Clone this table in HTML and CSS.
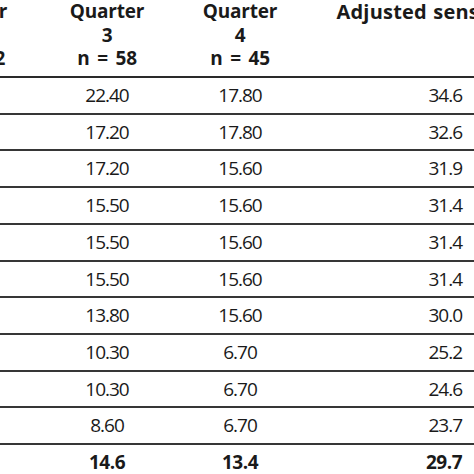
FILE: index.html
```html
<!DOCTYPE html>
<html>
<head>
<meta charset="utf-8">
<link rel="stylesheet" href="styles.css">
</head>
<body>
<table class="tbl">
  <colgroup>
    <col class="c2"><col class="c3"><col class="c4"><col class="c5">
  </colgroup>
  <thead>
    <tr class="head">
      <th>Quarter<br>2<br>n = 102</th>
      <th>Quarter<br>3<br>n = 58</th>
      <th>Quarter<br>4<br>n = 45</th>
      <th class="adj">Adjusted sensitivity (%)</th>
    </tr>
  </thead>
  <tbody>
    <tr><td>20.70</td><td>22.40</td><td>17.80</td><td class="r">34.6</td></tr>
    <tr><td>19.00</td><td>17.20</td><td>17.80</td><td class="r">32.6</td></tr>
    <tr><td>19.00</td><td>17.20</td><td>15.60</td><td class="r">31.9</td></tr>
    <tr><td>19.00</td><td>15.50</td><td>15.60</td><td class="r">31.4</td></tr>
    <tr><td>19.00</td><td>15.50</td><td>15.60</td><td class="r">31.4</td></tr>
    <tr><td>19.00</td><td>15.50</td><td>15.60</td><td class="r">31.4</td></tr>
    <tr><td>17.20</td><td>13.80</td><td>15.60</td><td class="r">30.0</td></tr>
    <tr><td>13.80</td><td>10.30</td><td>6.70</td><td class="r">25.2</td></tr>
    <tr><td>12.10</td><td>10.30</td><td>6.70</td><td class="r">24.6</td></tr>
    <tr><td>12.10</td><td>8.60</td><td>6.70</td><td class="r">23.7</td></tr>
    <tr class="total"><td>17.1</td><td>14.6</td><td>13.4</td><td class="r">29.7</td></tr>
  </tbody>
</table>
</body>
</html>
```
FILE: styles.css
```css
html, body {
  margin: 0;
  padding: 0;
  background: #ffffff;
  overflow: hidden;
  width: 474px;
  height: 474px;
}

body {
  font-family: "Open Sans", "Liberation Sans", sans-serif;
  color: #1a1a1a;
}

.tbl {
  border-collapse: separate;
  border-spacing: 0;
  table-layout: fixed;
  width: 574.5px;
  margin-left: -100.5px;
}

.c2 { width: 141px; }
.c3 { width: 133px; }
.c4 { width: 133px; }
.c5 { width: 167.5px; }

.head th {
  font-weight: 700;
  font-size: 19px;
  letter-spacing: -0.2px;
  word-spacing: 3px;
  line-height: 23.5px;
  height: 76px;
  padding: 0;
  vertical-align: top;
  text-align: center;
  border-bottom: 2px solid #2a2a2a;
  white-space: nowrap;
  overflow: visible;
}

.head th.adj {
  text-align: left;
  padding-left: 30px;
  font-size: 20px;
  letter-spacing: 0.2px;
  word-spacing: 1px;
}

tbody td {
  font-size: 19px;
  font-weight: 400;
  letter-spacing: -1px;
  line-height: 34.7px;
  padding: 0;
  text-align: center;
  border-bottom: 2px solid #363636;
  white-space: nowrap;
}

tbody td.r {
  text-align: right;
  padding-right: 12px;
}

tbody tr.total td {
  border-bottom: none;
  font-weight: 700;
  letter-spacing: -0.5px;
}
```
